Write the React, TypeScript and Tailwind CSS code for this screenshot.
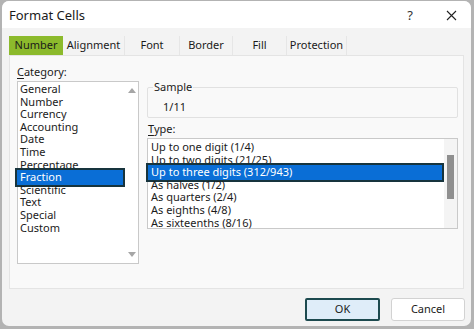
import React from "react";

const categories = [
  "General",
  "Number",
  "Currency",
  "Accounting",
  "Date",
  "Time",
  "Percentage",
  "Fraction",
  "Scientific",
  "Text",
  "Special",
  "Custom",
];

const types = [
  "Up to one digit (1/4)",
  "Up to two digits (21/25)",
  "Up to three digits (312/943)",
  "As halves (1/2)",
  "As quarters (2/4)",
  "As eighths (4/8)",
  "As sixteenths (8/16)",
];

const tabs = [
  { name: "Number", w: "w-[54px]" },
  { name: "Alignment", w: "w-[62px]" },
  { name: "Font", w: "w-[55px]" },
  { name: "Border", w: "w-[53px]" },
  { name: "Fill", w: "w-[54px]" },
  { name: "Protection", w: "w-[60px]" },
];

function ListItem({ label, selected, left }: { label: string; selected: boolean; left: string }) {
  return (
    <div className="relative h-[12.6px] leading-[12.6px]">
      {selected && (
        <div
          className={`absolute ${left} right-0 -top-[3px] -bottom-[3px] bg-[#0a6ed6] border-2 border-[#17343d]`}
        />
      )}
      <span className={`relative whitespace-nowrap ${selected ? "text-white" : "text-[#1b1b1b]"}`}>
        {label}
      </span>
    </div>
  );
}

export default function App() {
  return (
    <div
      className="w-[474px] h-[329px] bg-[#b3b3b3] pt-[1px] pl-[2px] pr-[3px] pb-[3px]"
      style={{ fontFamily: '"Noto Sans", "Open Sans", sans-serif' }}
    >
      <div className="h-full rounded-[7px] overflow-hidden bg-[#f3f3f3] flex flex-col">
        {/* title bar */}
        <div className="h-[27px] bg-white flex items-center pl-[7px] pr-[14px] pt-[2px] shrink-0">
          <span className="text-[13px] text-[#1a1a1a]">Format Cells</span>
          <span className="ml-auto text-[13px] text-[#333] mr-[33px]">?</span>
          <svg width="11" height="11" viewBox="0 0 11 11" className="mb-[1px]">
            <path d="M1 1L10 10M10 1L1 10" stroke="#222" strokeWidth="1.1" />
          </svg>
        </div>

        {/* tabs */}
        <div className="flex pl-[7px] mt-[8px] h-[19px] shrink-0">
          {tabs.map((t, i) => (
            <div
              key={t.name}
              className={`${t.w} flex items-center justify-center text-[11px] ${
                i === 0
                  ? "bg-[#8cba2c] text-[#1a1a1a]"
                  : "border-r border-[#e6e6e6] text-[#1a1a1a]"
              }`}
            >
              {t.name}
            </div>
          ))}
        </div>

        {/* tab panel */}
        <div className="ml-[7px] w-[455px] h-[234px] bg-[#f9f9f9] border border-[#e4e4e4] flex text-[11px] shrink-0">
          {/* category column */}
          <div className="pl-[7px] pt-[8px]">
            <div className="h-[15px] leading-[15px] text-[#1b1b1b]">
              <span className="underline underline-offset-2">C</span>ategory:
            </div>
            <div className="mt-[2px] w-[122px] h-[183px] bg-white border border-[#c9c9c9] flex">
              <div className="flex-1 pt-[1px] pl-[2px] ">
                {categories.map((c) => (
                  <ListItem key={c} label={c} selected={c === "Fraction"} left="-left-[5px]" />
                ))}
              </div>
              <div className="w-[13px] flex flex-col items-center justify-between py-[6px]">
                <svg width="8" height="5" viewBox="0 0 8 5">
                  <path d="M0 5L4 0L8 5Z" fill="#a6a6a6" />
                </svg>
                <svg width="8" height="5" viewBox="0 0 8 5">
                  <path d="M0 0L8 0L4 5Z" fill="#a6a6a6" />
                </svg>
              </div>
            </div>
          </div>

          {/* right column */}
          <div className="ml-[8px] pt-[31px] w-[311px]">
            <div className="relative h-[31px] border border-[#e1e1e1] rounded-[2px]">
              <span className="absolute -top-[9px] left-[5px] px-[1px] bg-[#f9f9f9] text-[#1b1b1b] leading-[15px]">
                Sample
              </span>
              <div className="pl-[15px] pt-[11px] leading-[15px] text-[#1b1b1b]">1/11</div>
            </div>
            <div className="mt-[3px] h-[16px] leading-[16px] text-[#1b1b1b] pl-[1px]">
              <span className="underline underline-offset-2">T</span>ype:
            </div>
            <div className="mt-[1px] h-[91px] bg-white border border-[#c9c9c9] flex">
              <div className="flex-1 pt-[2px] pl-[3px]">
                {types.map((t) => (
                  <ListItem
                    key={t}
                    label={t}
                    selected={t === "Up to three digits (312/943)"}
                    left="-left-[5px]"
                  />
                ))}
              </div>
              <div className="w-[13px] bg-[#f4f4f4] flex justify-center pt-[16px]">
                <div className="w-[7px] h-[44px] bg-[#8f8f8f]" />
              </div>
            </div>
          </div>
        </div>

        {/* buttons */}
        <div className="flex justify-end gap-[11px] pr-[6px] mt-[9px] text-[11px]">
          <div className="w-[75px] h-[23px] bg-[#dfedf9] border-2 border-[#1d4a4f] rounded-[2px] flex items-center justify-center text-[#1a1a1a]">
            OK
          </div>
          <div className="w-[74px] h-[23px] bg-white border border-[#d2d2d2] rounded-[3px] flex items-center justify-center text-[#1a1a1a]">
            Cancel
          </div>
        </div>
      </div>
    </div>
  );
}
